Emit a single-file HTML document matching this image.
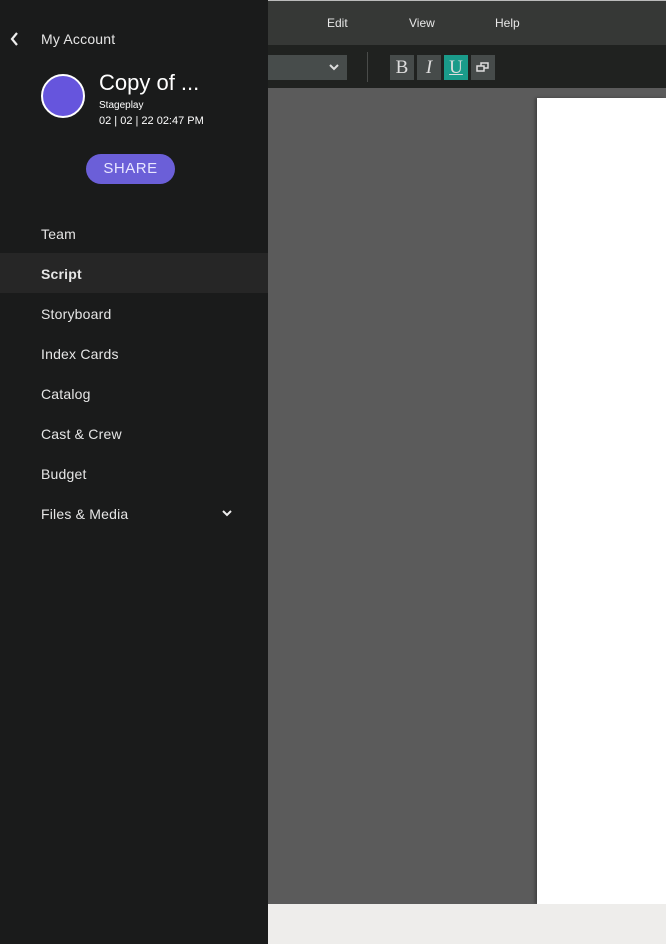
<!DOCTYPE html>
<html><head><style>
body{margin:0;width:666px;height:944px;position:relative;overflow:hidden;background:#5b5b5b;font-family:"Liberation Sans",sans-serif;}
div{position:absolute;box-sizing:border-box}
.top{left:0;top:0;width:666px;height:45px;background:#363836;border-top:1px solid #bbb}
.tb{left:0;top:45px;width:666px;height:43px;background:#202220}
.m{top:16px;color:#e8e8e8;font-size:12px}
.btn{top:55px;width:24px;height:25px;background:#464b4a;color:#ddd;font-family:"Liberation Serif",serif;font-size:19px;text-align:center;line-height:25px}
.side{left:0;top:0;width:268px;height:944px;background:#1a1b1b}
.it{left:41px;color:#e6e6e6;font-size:14px;letter-spacing:.2px}
</style></head><body>
<div class="top"></div>
<div class="m" style="left:327px">Edit</div>
<div class="m" style="left:409px">View</div>
<div class="m" style="left:495px">Help</div>
<div class="tb"></div>
<div style="left:268px;top:55px;width:79px;height:25px;background:#474c4b"></div>
<svg style="position:absolute;left:328px;top:63px" width="12" height="8"><path d="M2 2l4 4 4-4" stroke="#ddd" stroke-width="2" fill="none"/></svg>
<div style="left:367px;top:52px;width:1px;height:30px;background:#4a4c4a"></div>
<div class="btn" style="left:390px">B</div>
<div class="btn" style="left:417px;font-style:italic">I</div>
<div class="btn" style="left:444px;background:#1a9b8a;text-decoration:underline">U</div>
<div class="btn" style="left:471px"><svg width="24" height="25"><rect x="10" y="8" width="7" height="5" stroke="#ddd" fill="none" stroke-width="1.5"/><rect x="6" y="11" width="7" height="5" stroke="#ddd" fill="#464b4a" stroke-width="1.5"/></svg></div>
<div style="left:537px;top:98px;width:129px;height:806px;background:#fff;box-shadow:-2px 0 3px rgba(0,0,0,.3)"></div>
<div style="left:268px;top:904px;width:398px;height:40px;background:#eeedeb"></div>
<div class="side"></div>
<svg style="position:absolute;left:9px;top:31px" width="12" height="16"><path d="M8 2l-5 6 5 6" stroke="#eee" stroke-width="2.2" fill="none"/></svg>
<div class="it" style="top:31px;font-size:14px">My Account</div>
<div style="left:41px;top:74px;width:44px;height:44px;border-radius:50%;background:#6655dd;border:2px solid #fff"></div>
<div style="left:99px;top:70px;color:#fff;font-size:22px">Copy of ...</div>
<div style="left:99px;top:100px;color:#fff;font-size:10px">Stageplay</div>
<div style="left:99px;top:115px;color:#fff;font-size:11px">02 | 02 | 22 02:47 PM</div>
<div style="left:86px;top:154px;width:89px;height:30px;border-radius:15px;background:#6b5fd8;color:#e8e6ff;font-size:15px;text-align:center;line-height:30px;letter-spacing:.5px">SHARE</div>
<div style="left:0;top:253px;width:268px;height:40px;background:#262626"></div>
<div class="it" style="top:226px">Team</div>
<div class="it" style="top:266px;font-weight:bold">Script</div>
<div class="it" style="top:306px">Storyboard</div>
<div class="it" style="top:346px">Index Cards</div>
<div class="it" style="top:386px">Catalog</div>
<div class="it" style="top:426px">Cast &amp; Crew</div>
<div class="it" style="top:466px">Budget</div>
<div class="it" style="top:506px">Files &amp; Media</div>
<svg style="position:absolute;left:221px;top:509px" width="12" height="8"><path d="M2 2l4 4 4-4" stroke="#eee" stroke-width="2" fill="none"/></svg>
</body></html>
